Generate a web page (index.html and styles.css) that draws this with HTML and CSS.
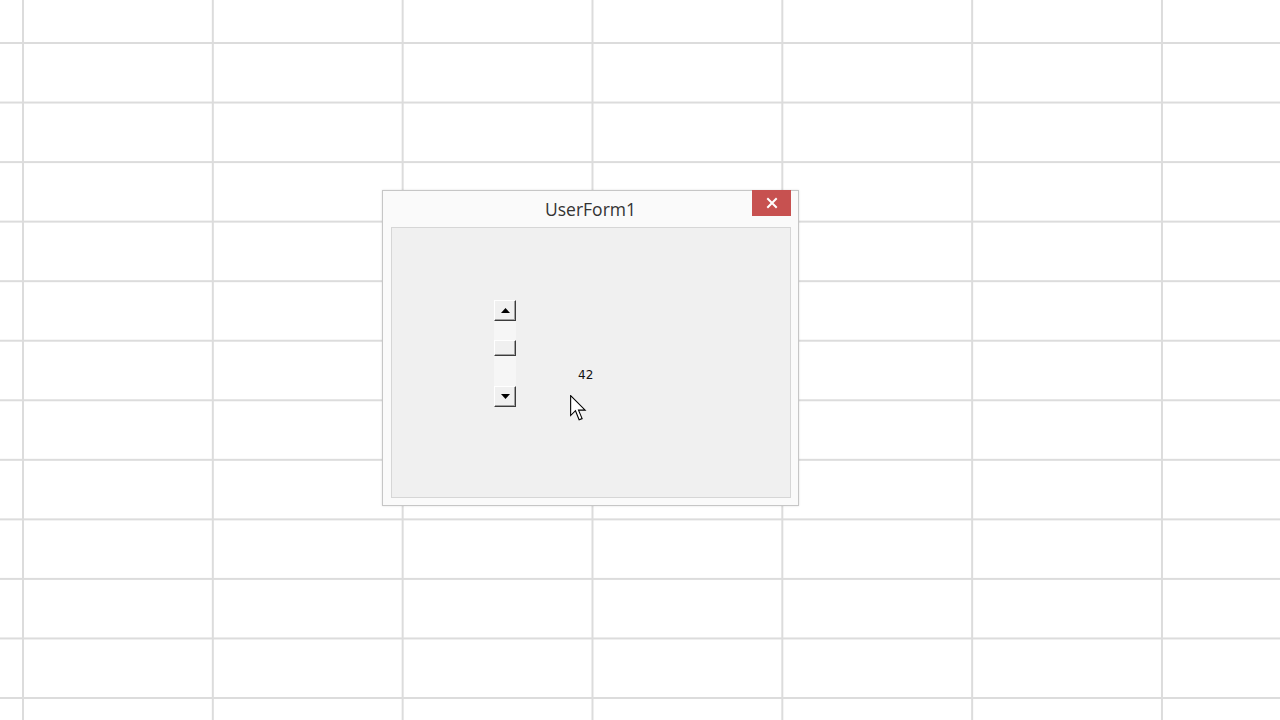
FILE: index.html
```html
<!DOCTYPE html>
<html>
<head>
<meta charset="utf-8">
<link rel="stylesheet" href="styles.css">
</head>
<body>
<div class="sheet">
  <div class="window">
    <div class="titlebar">
      <span class="title">UserForm1</span>
      <div class="close">
        <svg width="12" height="12" viewBox="0 0 12 12"><path d="M2 2 L10 10 M10 2 L2 10" stroke="#fff" stroke-width="2" stroke-linecap="square"/></svg>
      </div>
    </div>
    <div class="panel">
      <div class="spin">
        <div class="btn">
          <svg width="9" height="5" viewBox="0 0 9 5"><path d="M4.5 0 L9 5 L0 5 Z" fill="#000"/></svg>
        </div>
        <div class="track">
          <div class="thumb"></div>
        </div>
        <div class="btn">
          <svg width="9" height="5" viewBox="0 0 9 5"><path d="M0 0 L9 0 L4.5 5 Z" fill="#000"/></svg>
        </div>
      </div>
      <div class="value">42</div>
    </div>
  </div>
  <svg class="cursor" width="17" height="26" viewBox="0 0 14 21.5">
    <path d="M0.5 0.5 L0.5 17 L4.5 13 L7.5 20.5 L10 19.5 L7 12.5 L12.5 12.5 Z" fill="#fff" stroke="#000" stroke-width="0.9" stroke-linejoin="miter"/>
  </svg>
</div>
</body>
</html>
```

FILE: styles.css
```css
html, body {
  margin: 0;
  padding: 0;
  width: 1280px;
  height: 720px;
  overflow: hidden;
  background: #ffffff;
}

.sheet {
  position: relative;
  width: 1280px;
  height: 720px;
  background-color: #ffffff;
  background-image:
    linear-gradient(to right, #dcdcdc 2px, transparent 2px),
    linear-gradient(to bottom, #dcdcdc 2px, transparent 2px);
  background-size: 189.83px 59.55px;
  background-position: 22px 42px;
}

.window {
  position: absolute;
  left: 382px;
  top: 190px;
  width: 417px;
  height: 316px;
  box-sizing: border-box;
  border: 1px solid #c6c6c6;
  background: #fafafa;
  box-shadow: 0 0 2px rgba(0, 0, 0, 0.12);
  display: flex;
  flex-direction: column;
  padding: 0 7px 7px 7px;
}

.titlebar {
  position: relative;
  height: 36px;
  display: flex;
  align-items: center;
  justify-content: center;
}

.title {
  font-family: "Open Sans", "Noto Sans", sans-serif;
  font-size: 17.5px;
  color: #333333;
  margin-bottom: 1px;
}

.close {
  position: absolute;
  top: -1px;
  right: 0px;
  width: 39px;
  height: 26px;
  background: #c75150;
  display: flex;
  align-items: center;
  justify-content: center;
}

.panel {
  position: relative;
  flex: 1;
  border: 1px solid #d6d6d6;
  background: #f0f0f0;
  margin: 0 0 0 1px;
}

.spin {
  position: absolute;
  left: 102px;
  top: 72px;
  width: 22px;
  height: 107px;
  display: flex;
  flex-direction: column;
}

.btn {
  height: 21px;
  box-sizing: border-box;
  background: #f0f0f0;
  border-top: 1px solid #ffffff;
  border-left: 1px solid #ffffff;
  border-right: 1px solid #3c3c3c;
  border-bottom: 1px solid #3c3c3c;
  box-shadow: inset -1px -1px 0 #a0a0a0;
  display: flex;
  align-items: center;
  justify-content: center;
}

.track {
  flex: 1;
  background: #f6f6f6;
  display: flex;
  flex-direction: column;
}

.thumb {
  margin-top: 19px;
  height: 16px;
  box-sizing: border-box;
  background: #f0f0f0;
  border-top: 1px solid #ffffff;
  border-left: 1px solid #ffffff;
  border-right: 1px solid #3c3c3c;
  border-bottom: 1px solid #3c3c3c;
  box-shadow: inset -1px -1px 0 #a0a0a0;
}

.value {
  position: absolute;
  left: 186px;
  top: 140px;
  font-family: "DejaVu Sans", sans-serif;
  font-size: 12px;
  color: #111111;
}

.cursor {
  position: absolute;
  left: 570px;
  top: 395px;
}
```
